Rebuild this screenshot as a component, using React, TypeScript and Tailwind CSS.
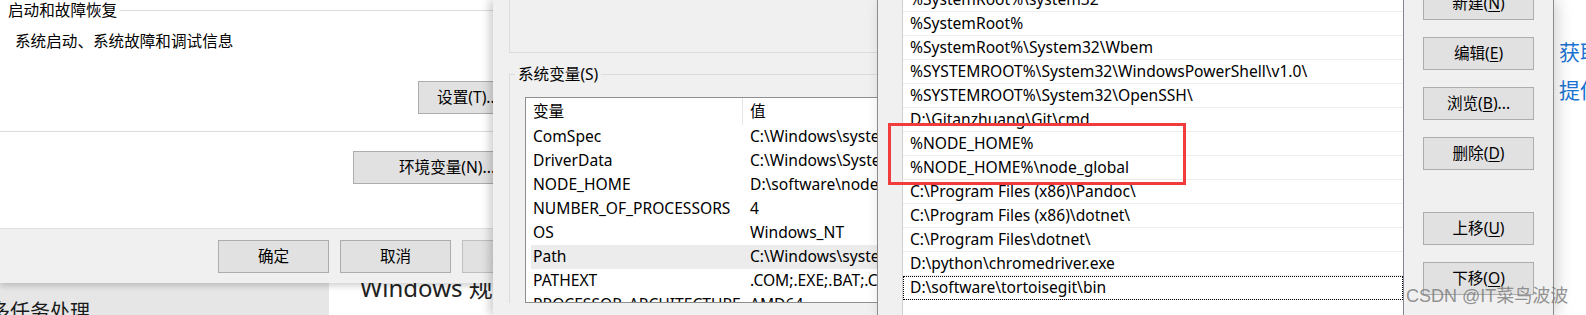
import React from 'react'

const FONT = "font-['Noto_Sans','Noto_Sans_CJK_SC',sans-serif]"

const sysVars = [
  ['ComSpec', 'C:\\Windows\\system32\\cmd.exe'],
  ['DriverData', 'C:\\Windows\\System32\\Drivers\\DriverData'],
  ['NODE_HOME', 'D:\\software\\nodejs'],
  ['NUMBER_OF_PROCESSORS', '4'],
  ['OS', 'Windows_NT'],
  ['Path', 'C:\\Windows\\system32;C:\\Windows;'],
  ['PATHEXT', '.COM;.EXE;.BAT;.CMD;.VBS'],
  ['PROCESSOR_ARCHITECTURE', 'AMD64'],
]

const paths = [
  '%SystemRoot%\\system32',
  '%SystemRoot%',
  '%SystemRoot%\\System32\\Wbem',
  '%SYSTEMROOT%\\System32\\WindowsPowerShell\\v1.0\\',
  '%SYSTEMROOT%\\System32\\OpenSSH\\',
  'D:\\Gitanzhuang\\Git\\cmd',
  '%NODE_HOME%',
  '%NODE_HOME%\\node_global',
  'C:\\Program Files (x86)\\Pandoc\\',
  'C:\\Program Files (x86)\\dotnet\\',
  'C:\\Program Files\\dotnet\\',
  'D:\\python\\chromedriver.exe',
  'D:\\software\\tortoisegit\\bin',
]

function WinButton({ children, className = '' }: { children: React.ReactNode; className?: string }) {
  return (
    <div className={`flex h-[33px] shrink-0 items-center justify-center whitespace-nowrap border border-[#adadad] bg-[#e1e1e1] ${className}`}>
      {children}
    </div>
  )
}

function Key({ k }: { k: string }) {
  return <span className="underline underline-offset-2">{k}</span>
}

export default function App() {
  return (
    <div className={`relative flex h-[315px] w-[1586px] overflow-hidden bg-white text-[15.6px] leading-none text-black ${FONT}`}>

      {/* System properties dialog + page behind it */}
      <div className="flex w-[493px] shrink-0 flex-col overflow-hidden">
        <div className="relative z-10 shadow-[0_3px_6px_rgba(0,0,0,0.18)]">
          <div className="h-[228px] bg-white">
            <div className="flex h-[21px] items-center">
              <span className="shrink-0 pl-[8px]">启动和故障恢复</span>
              <div className="ml-[3px] flex-1 border-t border-[#dcdcdc]" />
            </div>
            <div className="mt-[10px] flex h-[21px] items-center pl-[15px]">系统启动、系统故障和调试信息</div>
            <WinButton className="ml-[418px] mt-[29px] w-[100px]">设置(T)...</WinButton>
            <div className="mt-[17px] border-t border-[#dcdcdc]" />
            <WinButton className="ml-[353px] mt-[19px] w-[188px]">环境变量(N)...</WinButton>
          </div>
          <div className="flex h-[55px] gap-[11px] border-t border-[#dfdfdf] bg-[#f0f0f0] pl-[218px] pt-[11px]">
            <WinButton className="w-[111px]">确定</WinButton>
            <WinButton className="w-[111px]">取消</WinButton>
            <WinButton className="w-[111px] border-[#bfbfbf] bg-[#cccccc] text-[#838383]">应用(A)</WinButton>
          </div>
        </div>
        <div className="flex h-[32px]">
          <div className="w-[329px] shrink-0 bg-[#e6e6e6] pt-[19px]">
            <span className="ml-[-10px] block whitespace-nowrap text-[20px] leading-[20px] text-[#1a1a1a]">多任务处理</span>
          </div>
          <div className="min-w-0 flex-1 pl-[31px]">
            <span className="mt-[-7px] block whitespace-nowrap text-[24px] leading-[24px] text-[#222]">Windows 规划</span>
          </div>
        </div>
      </div>

      {/* Environment variables dialog */}
      <div className="relative z-20 w-[384px] shrink-0 overflow-hidden bg-[#f0f0f0] shadow-[-4px_0_8px_rgba(0,0,0,0.18)]">
        <div className="ml-4 h-[53px] w-[420px] border-b border-l border-[#dcdcdc]" />
        <fieldset className="ml-4 mt-[10px] w-[420px] border-l border-t border-[#dcdcdc] pb-0">
          <legend className="ml-[5px] px-[3px] leading-[22px]">系统变量(S)</legend>
          <div className="ml-[15px] mt-[12px] h-[206px] w-[420px] overflow-hidden border border-[#8e8f8f] bg-white pl-[5px]">
            <div className="flex h-[27px] items-center">
              <div className="flex h-full w-[212px] shrink-0 items-center border-r border-[#e5e5e5] pl-[2px]">变量</div>
              <div className="pl-[7px]">值</div>
            </div>
            {sysVars.map(([name, value]) => (
              <div key={name} className={`flex h-[24px] items-center whitespace-nowrap ${name === 'Path' ? 'bg-[#ececec]' : ''}`}>
                <div className="w-[212px] shrink-0 pl-[2px]">{name}</div>
                <div className="pl-[7px]">{value}</div>
              </div>
            ))}
          </div>
        </fieldset>
      </div>

      {/* Edit environment variable dialog */}
      <div className="relative z-30 flex w-[677px] shrink-0 border-l border-r border-[#8c8c8c] bg-[#f0f0f0] pl-[24px] shadow-[4px_0_14px_rgba(0,0,0,0.16)]">
        <div className="w-[502px] shrink-0 overflow-hidden border-l border-r border-l-[#cfcfcf] border-r-[#828790] bg-white">
          <div className="mt-[-12px]">
            {paths.map((p, i) => (
              <div
                key={p}
                className={`flex h-[24px] items-center whitespace-nowrap border-b border-[#ededed] pl-[7px] ${i === paths.length - 1 ? 'outline outline-1 -outline-offset-1 outline-dotted outline-black' : ''}`}
              >
                {p}
              </div>
            ))}
          </div>
        </div>
        <div className="ml-[19px] mt-[-13px] flex w-[111px] shrink-0 flex-col">
          <WinButton>新建(<Key k="N" />)</WinButton>
          <WinButton className="mt-[17px]">编辑(<Key k="E" />)</WinButton>
          <WinButton className="mt-[17px]">浏览(<Key k="B" />)...</WinButton>
          <WinButton className="mt-[17px]">删除(<Key k="D" />)</WinButton>
          <WinButton className="mt-[42px]">上移(<Key k="U" />)</WinButton>
          <WinButton className="mt-[17px]">下移(<Key k="O" />)</WinButton>
        </div>
      </div>

      {/* Settings page behind, on the right */}
      <div className="min-w-0 flex-1 pl-[5px] pt-[41px] text-[21px] leading-[22px] text-[#1a73d1]">
        <div className="whitespace-nowrap">获取帮助</div>
        <div className="mt-[16px] whitespace-nowrap">提供反馈</div>
      </div>

      {/* Annotation */}
      <div className="absolute left-[888px] top-[123px] z-40 h-[62px] w-[298px] border-[3px] border-[#f03c3c]" />
      <div className="absolute left-[1406px] top-[286px] z-40 whitespace-nowrap font-['Liberation_Sans','Noto_Sans_CJK_SC',sans-serif] text-[18px] leading-[20px] text-[rgba(120,120,120,0.8)]">
        CSDN @IT菜鸟波波
      </div>
    </div>
  )
}
